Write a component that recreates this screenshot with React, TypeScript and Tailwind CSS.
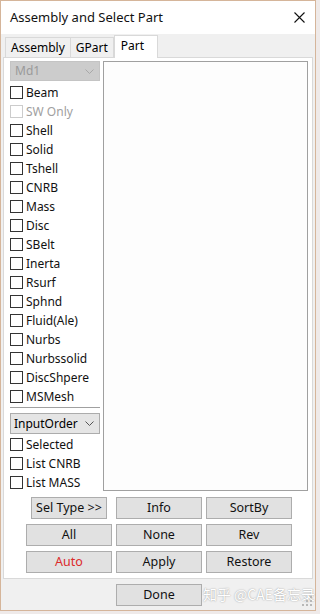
import React from 'react';

const types = [
  'Beam', 'SW Only', 'Shell', 'Solid', 'Tshell', 'CNRB', 'Mass', 'Disc', 'SBelt',
  'Inerta', 'Rsurf', 'Sphnd', 'Fluid(Ale)', 'Nurbs', 'Nurbssolid', 'DiscShpere', 'MSMesh'
];

const listOpts = ['Selected', 'List CNRB', 'List MASS'];

function Check({ label, disabled }: { label: string; disabled?: boolean }) {
  return (
    <div className="h-[19px] flex items-center">
      <span
        className={
          disabled
            ? 'w-[13px] h-[13px] border border-[#cccccc] bg-white'
            : 'w-[13px] h-[13px] border border-[#333333] bg-white'
        }
      />
      <span className={disabled ? 'ml-[3px] text-[#a0a0a0]' : 'ml-[3px] text-[#111]'}>{label}</span>
    </div>
  );
}

function Chevron({ color }: { color: string }) {
  return (
    <svg width="9" height="5" viewBox="0 0 9 5" fill="none">
      <path d="M0.5 0.5L4.5 4.5L8.5 0.5" stroke={color} strokeWidth="1" />
    </svg>
  );
}

function Btn({ children, red, w = 'w-[86px]' }: { children: React.ReactNode; red?: boolean; w?: string }) {
  return (
    <div
      className={`${w} h-[22px] flex items-center justify-center bg-[#e1e1e1] border border-[#adadad] ${
        red ? 'text-[#dc2a2a]' : 'text-[#111]'
      }`}
    >
      {children}
    </div>
  );
}

export default function App() {
  return (
    <div className="w-[320px] h-[614px] bg-[#efeae9] font-['Noto_Sans',sans-serif] text-[12px] leading-none">
      <div className="w-[316px] h-[611px] border border-[#d5b59a] bg-[#f0f0f0] flex flex-col">
        {/* title bar */}
        <div className="shrink-0 h-[33px] bg-white flex items-center justify-between pl-[9px] pr-[10px]">
          <span className="text-[13px] text-[#111]">Assembly and Select Part</span>
          <svg width="11" height="11" viewBox="0 0 11 11">
            <path d="M0.5 0.5L10.5 10.5M10.5 0.5L0.5 10.5" stroke="#111" strokeWidth="1.1" />
          </svg>
        </div>

        {/* tabs */}
        <div className="shrink-0 h-[23px] flex items-end pl-[4px]">
          <div className="h-[20px] px-[5px] flex items-center border border-b-0 border-[#d9d9d9] bg-[#f0f0f0]">Assembly</div>
          <div className="h-[20px] px-[5px] flex items-center border border-l-0 border-b-0 border-[#d9d9d9] bg-[#f0f0f0]">GPart</div>
          <div className="h-[23px] w-[44px] -mb-px pl-[6px] flex items-start pt-[4px] border border-b-0 border-[#d9d9d9] bg-white relative z-10">Part</div>
        </div>

        {/* panel */}
        <div className="shrink-0 mx-[2px] w-[310px] h-[522px] border border-[#d9d9d9] bg-white flex pt-[3px] pl-[6px]">
          <div className="w-[90px] flex flex-col">
            <div className="h-[20px] bg-[#cccccc] border border-[#c4c4c4] flex items-center justify-between pl-[4px] pr-[5px] text-[#9a9a9a] text-[12px]">
              <span>Md1</span>
              <Chevron color="#a8a8a8" />
            </div>
            <div className="mt-[2px] flex flex-col">
              {types.map((t) => (
                <Check key={t} label={t} disabled={t === 'SW Only'} />
              ))}
            </div>
            <div className="mt-[1px] h-px bg-[#a0a0a0]" />
            <div className="mt-[5px] h-[21px] bg-[#e5e5e5] border border-[#acacac] flex items-center justify-between pl-[3px] pr-[5px] text-[12px]">
              <span>InputOrder</span>
              <Chevron color="#555" />
            </div>
            <div className="mt-[1px] flex flex-col">
              {listOpts.map((t) => (
                <Check key={t} label={t} />
              ))}
            </div>
          </div>
          <div className="ml-[3px] w-[205px] h-[430px] border border-[#a0a0a0] bg-[#fdfdfd]" />
        </div>

        {/* buttons overlaying panel bottom */}
        <div className="shrink-0 -mt-[82px] relative z-10 pl-[25px] flex flex-col gap-[5px] text-[12.5px]">
          <div className="flex gap-[4px]">
            <div className="w-[86px] flex justify-center">
              <Btn w="w-[76px]">Sel Type &gt;&gt;</Btn>
            </div>
            <Btn>Info</Btn>
            <Btn>SortBy</Btn>
          </div>
          <div className="flex gap-[4px]">
            <Btn>All</Btn>
            <Btn>None</Btn>
            <Btn>Rev</Btn>
          </div>
          <div className="flex gap-[4px]">
            <Btn red>Auto</Btn>
            <Btn>Apply</Btn>
            <Btn>Restore</Btn>
          </div>
        </div>

        <div className="shrink-0 mt-[11px] flex items-start pl-[115px] relative text-[12.5px]">
          <Btn>Done</Btn>
          <span className="ml-[1px] mt-[3px] whitespace-nowrap text-[14px] text-white [text-shadow:0_0_1.5px_#8a8a8a] font-['Noto_Sans_CJK_SC',sans-serif]">
            知乎 @CAE备忘录
          </span>
          <svg className="absolute right-[3px] top-[12px]" width="10" height="10" viewBox="0 0 10 10">
            <rect x="8" y="0" width="2" height="2" fill="#b8b8b8" />
            <rect x="4" y="4" width="2" height="2" fill="#b8b8b8" />
            <rect x="8" y="4" width="2" height="2" fill="#b8b8b8" />
            <rect x="0" y="8" width="2" height="2" fill="#b8b8b8" />
            <rect x="4" y="8" width="2" height="2" fill="#b8b8b8" />
            <rect x="8" y="8" width="2" height="2" fill="#b8b8b8" />
          </svg>
        </div>
      </div>
    </div>
  );
}
